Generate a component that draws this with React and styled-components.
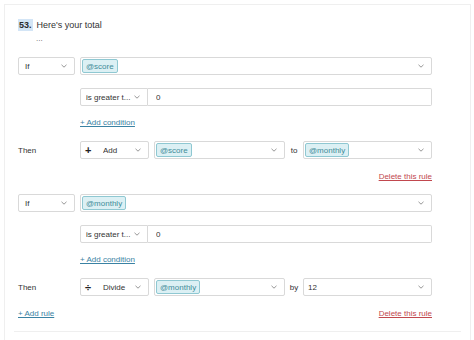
import React from "react";
import styled, { createGlobalStyle } from "styled-components";

const GlobalStyle = createGlobalStyle`
  body {
    margin: 0;
    background: #ffffff;
    font-family: "Liberation Sans", Arial, sans-serif;
    color: #333333;
  }
`;

const Card = styled.div`
  margin: 4px 0 0 4px;
  width: 467px;
  min-height: 340px;
  border: 1px solid #efefef;
  border-bottom: none;
  padding: 14px 38px 0 13px;
  box-sizing: border-box;
`;

const Header = styled.div`
  display: flex;
  align-items: center;
  height: 12px;
  font-size: 9px;
  gap: 4px;
`;

const Number = styled.span`
  font-weight: 700;
  background: #d3e5f6;
  padding: 1px 1px;
  color: #2b2b2b;
`;

const Ellipsis = styled.div`
  margin: 2px 0 0 18px;
  height: 12px;
  line-height: 12px;
  font-size: 8px;
  color: #666;
`;

const Rule = styled.div`
  display: flex;
  flex-direction: column;
  margin-top: ${(p) => p.$top}px;
`;

const Row = styled.div`
  display: flex;
  align-items: center;
  height: 18px;
  margin-top: ${(p) => p.$top || 0}px;
  padding-left: ${(p) => p.$indent || 0}px;
`;

const Label = styled.div`
  width: ${(p) => p.$width}px;
  flex: none;
  font-size: 8px;
  color: #333;
  text-align: ${(p) => (p.$center ? "center" : "left")};
`;

const Box = styled.div`
  display: flex;
  align-items: center;
  box-sizing: border-box;
  height: 18px;
  border: 1px solid #d9d9d9;
  border-radius: 2px;
  background: #fff;
  font-size: 8px;
  color: #333;
  width: ${(p) => (p.$width ? `${p.$width}px` : "auto")};
  flex: ${(p) => (p.$width ? "none" : "1")};
  padding: 0 7px 0 ${(p) => p.$pad ?? 5}px;
  margin-left: ${(p) => p.$ml || 0}px;
`;

const Joined = styled(Box)`
  border-left: ${(p) => (p.$right ? "none" : "1px solid #d9d9d9")};
  border-radius: ${(p) => (p.$right ? "0 2px 2px 0" : "2px 0 0 2px")};
`;

const Value = styled.span`
  flex: 1;
  white-space: nowrap;
  overflow: hidden;
`;

const Tag = styled.span`
  display: inline-flex;
  align-items: center;
  height: 14px;
  box-sizing: border-box;
  padding: 0 3px;
  border: 1px solid #8fc8d2;
  border-radius: 2px;
  background: #dcf0f4;
  color: #3f8c99;
  font-size: 8px;
`;

const OpIcon = styled.span`
  width: 13px;
  flex: none;
  font-size: 11px;
  font-weight: 700;
  color: #222;
  margin-right: 5px;
`;

const Spacer = styled.div`
  flex: 1;
`;

const Link = styled.a`
  font-size: 8px;
  line-height: 12px;
  height: 12px;
  text-decoration: underline;
  color: ${(p) => (p.$danger ? "#c1484e" : "#3a82a3")};
  cursor: pointer;
`;

const LinkRow = styled.div`
  display: flex;
  justify-content: ${(p) => p.$justify || "flex-start"};
  height: 12px;
  margin-top: ${(p) => p.$top}px;
  padding-left: ${(p) => p.$indent || 0}px;
`;

const Divider = styled.div`
  height: 1px;
  background: #efefef;
  margin: 11px -29px 0 -4px;
`;

function Chevron() {
  return (
    <svg width="6" height="4" viewBox="0 0 6 4" style={{ flex: "none" }}>
      <path d="M0.5 0.8 L3 3.2 L5.5 0.8" fill="none" stroke="#8a8a8a" strokeWidth="0.9" />
    </svg>
  );
}

function Select({ width, pad, ml, children }) {
  return (
    <Box $width={width} $pad={pad} $ml={ml}>
      <Value>{children}</Value>
      <Chevron />
    </Box>
  );
}

function VarField({ width, ml, name }) {
  return (
    <Box $width={width} $pad={1} $ml={ml}>
      <Value>
        <Tag>{name}</Tag>
      </Value>
      <Chevron />
    </Box>
  );
}

function Condition({ variable }) {
  return (
    <>
      <Row>
        <Select width={57} pad={6}>If</Select>
        <VarField ml={5} name={variable} />
      </Row>
      <Row $top={13} $indent={62}>
        <Joined $width={68} $pad={5}>
          <Value>is greater t...</Value>
          <Chevron />
        </Joined>
        <Joined $right $pad={8}>
          <Value>0</Value>
        </Joined>
      </Row>
      <LinkRow $top={11} $indent={62}>
        <Link>+ Add condition</Link>
      </LinkRow>
    </>
  );
}

export default function App() {
  return (
    <>
      <GlobalStyle />
      <Card>
        <Header>
          <Number>53.</Number>
          <span>Here's your total</span>
        </Header>
        <Ellipsis>...</Ellipsis>

        <Rule $top={12}>
          <Condition variable="@score" />
          <Row $top={12}>
            <Label $width={62}>Then</Label>
            <Box $width={69} $pad={4}>
              <OpIcon>+</OpIcon>
              <Value>Add</Value>
              <Chevron />
            </Box>
            <VarField width={131} ml={5} name="@score" />
            <Label $width={18} $center>to</Label>
            <VarField name="@monthly" />
          </Row>
          <LinkRow $top={12} $justify="flex-end">
            <Link $danger>Delete this rule</Link>
          </LinkRow>
        </Rule>

        <Rule $top={11}>
          <Condition variable="@monthly" />
          <Row $top={12}>
            <Label $width={62}>Then</Label>
            <Box $width={69} $pad={4}>
              <OpIcon>÷</OpIcon>
              <Value>Divide</Value>
              <Chevron />
            </Box>
            <VarField width={131} ml={5} name="@monthly" />
            <Label $width={18} $center>by</Label>
            <Select pad={4}>12</Select>
          </Row>
        </Rule>

        <LinkRow $top={12}>
          <Link>+ Add rule</Link>
          <Spacer />
          <Link $danger>Delete this rule</Link>
        </LinkRow>
        <Divider />
      </Card>
    </>
  );
}
